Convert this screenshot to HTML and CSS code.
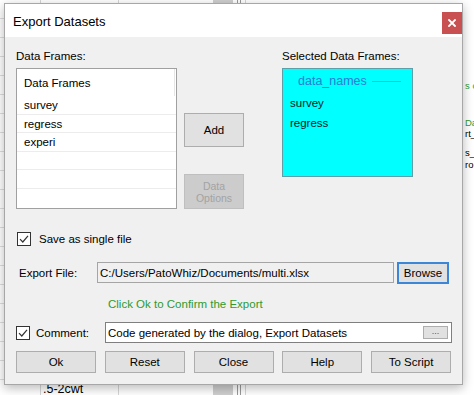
FILE: index.html
```html
<!DOCTYPE html>
<html>
<head>
<meta charset="utf-8">
<title>Export Datasets</title>
<link rel="stylesheet" href="styles.css">
</head>
<body>
<div class="desk">
  <div class="desk-notes">
    <div class="note green n1">s c</div>
    <div class="note green n2">Da</div>
    <div class="note n3">rt_</div>
    <div class="note n4">s_</div>
    <div class="note n5">ro</div>
  </div>
  <div class="desk-cell">.5-2cwt</div>
</div>

<div class="dialog">
  <div class="titlebar">
    <span class="title">Export Datasets</span>
    <span class="close">
      <svg width="8" height="8" viewBox="0 0 8 8"><path d="M1 1L7 7M7 1L1 7" stroke="#fff" stroke-width="1.8" stroke-linecap="square"/></svg>
    </span>
  </div>
  <div class="body">
    <div class="frames">
      <div class="col-left">
        <div class="label">Data Frames:</div>
        <div class="listbox">
          <div class="lb-head"><span>Data Frames</span></div>
          <div class="lb-row">survey</div>
          <div class="lb-row">regress</div>
          <div class="lb-row">experi</div>
          <div class="lb-row"></div>
          <div class="lb-row"></div>
          <div class="lb-row last"></div>
        </div>
      </div>
      <div class="col-mid">
        <div class="btn add">Add</div>
        <div class="btn disabled">Data<br>Options</div>
      </div>
      <div class="col-right">
        <div class="label">Selected Data Frames:</div>
        <div class="selbox">
          <div class="sel-legend"><span>data_names</span><i></i></div>
          <div class="sel-item">survey</div>
          <div class="sel-item">regress</div>
        </div>
      </div>
    </div>

    <div class="check-row save">
      <span class="checkbox"><svg width="12" height="12" viewBox="0 0 12 12"><path d="M2 6.2L4.8 9L10 2.8" fill="none" stroke="#333" stroke-width="1.2"/></svg></span>
      <span class="check-label">Save as single file</span>
    </div>

    <div class="export-row">
      <span class="field-label">Export File:</span>
      <div class="textbox readonly">C:/Users/PatoWhiz/Documents/multi.xlsx</div>
      <div class="btn browse">Browse</div>
    </div>

    <div class="hint">Click Ok to Confirm the Export</div>

    <div class="comment-row">
      <span class="checkbox"><svg width="12" height="12" viewBox="0 0 12 12"><path d="M2 6.2L4.8 9L10 2.8" fill="none" stroke="#333" stroke-width="1.2"/></svg></span>
      <span class="comment-label">Comment:</span>
      <div class="textbox comment">
        <span class="tb-text">Code generated by the dialog, Export Datasets</span>
        <span class="ellipsis">...</span>
      </div>
    </div>

    <div class="actions">
      <div class="btn">Ok</div>
      <div class="btn">Reset</div>
      <div class="btn">Close</div>
      <div class="btn">Help</div>
      <div class="btn">To Script</div>
    </div>
  </div>
</div>
</body>
</html>
```

FILE: styles.css
```css
* { box-sizing: border-box; }

body {
  margin: 0;
  width: 474px;
  height: 395px;
  overflow: hidden;
  position: relative;
  font-family: "Liberation Sans", Arial, sans-serif;
  font-size: 11.5px;
  color: #000;
  background: #fff;
}

/* window behind the dialog */
.desk {
  height: 395px;
  background:
    linear-gradient(90deg,
      transparent 0, transparent 40px, #d6d6d6 40px, #d6d6d6 41px,
      transparent 41px, transparent 118px, #d6d6d6 118px, #d6d6d6 119px,
      transparent 119px, transparent 213px, #cfcfcf 213px, #cfcfcf 233px,
      transparent 233px, transparent 237px, #9a9a9a 237px, #9a9a9a 238px,
      transparent 238px, transparent 240px, #9a9a9a 240px, #9a9a9a 241px,
      transparent 241px, transparent 245px, #d6d6d6 245px, #d6d6d6 246px,
      transparent 246px) 0 0 / 474px 395px no-repeat,
    repeating-linear-gradient(180deg, transparent 0, transparent 18px, #dedede 18px, #dedede 19px) 0 0 / 4px 395px no-repeat,
    #fff;
}

.desk-notes {
  padding: 80px 0 0 465px;
  font-size: 9.5px;
}
.note { line-height: 11px; height: 11px; white-space: nowrap; }
.note.green { color: #2f9a2f; }
.n2 { margin-top: 26px; }
.n3 { margin-top: 0; }
.n4 { margin-top: 8px; }
.n5 { margin-top: 1px; }

.desk-cell {
  margin-top: 212px;
  padding-left: 43px;
  font-size: 12.5px;
  line-height: 14px;
}

/* dialog (floats over the window behind) */
.dialog {
  position: absolute;
  left: 4px;
  top: 3px;
  width: 459px;
  height: 382px;
  background: #f0f0f0;
  border: 1px solid #a7a7a7;
  box-shadow: 0 3px 10px rgba(0, 0, 0, 0.28);
  display: flex;
  flex-direction: column;
}

.titlebar {
  height: 33px;
  background: #fff;
  display: flex;
  align-items: flex-start;
  justify-content: space-between;
  padding-left: 8px;
}
.title {
  font-size: 13px;
  line-height: 14px;
  margin-top: 11px;
  color: #000;
}
.close {
  width: 20px;
  height: 22px;
  margin-top: 8px;
  background: #c85050;
  display: flex;
  align-items: center;
  justify-content: center;
}

.body {
  padding: 12px 0 0 11px;
}

.frames {
  display: grid;
  grid-template-columns: 161px 60px 131px;
  column-gap: 7px;
}
.col-right { margin-left: 31px; }

.label {
  line-height: 14px;
  height: 14px;
  margin-bottom: 5px;
  white-space: nowrap;
}

.listbox {
  width: 161px;
  height: 141px;
  background: #fff;
  border: 1px solid #a0a0a0;
}
.lb-head {
  height: 27px;
  display: flex;
  align-items: center;
  padding-left: 7px;
  padding-top: 1px;
  background: linear-gradient(90deg, transparent 157px, #e6e6e6 157px, #e6e6e6 158px, transparent 158px);
}
.lb-row {
  height: 18.5px;
  line-height: 19px;
  padding-left: 7px;
  border-bottom: 1px solid #ececec;
}
.lb-row.last { border-bottom: 0; }

.col-mid {
  display: flex;
  flex-direction: column;
}

.btn {
  background: #e1e1e1;
  border: 1px solid #adadad;
  display: flex;
  align-items: center;
  justify-content: center;
  text-align: center;
  white-space: nowrap;
}
.btn.add {
  height: 34px;
  margin-top: 64px;
}
.btn.disabled {
  height: 35px;
  margin-top: 27px;
  background: #cccccc;
  border-color: #bfbfbf;
  color: #a3a3a3;
  font-size: 10.5px;
  line-height: 12px;
}

.selbox {
  width: 131px;
  height: 109px;
  background: #00ffff;
  border: 1px solid #5f9fa8;
  padding: 5px 0 0 7px;
}
.sel-legend {
  display: flex;
  align-items: center;
  height: 14px;
  margin-bottom: 5px;
  padding-left: 8px;
  color: #2b7cd3;
  font-size: 12.5px;
}
.sel-legend i {
  display: block;
  width: 29px;
  height: 1px;
  background: #4aa6dc;
  margin-left: 5px;
}
.sel-item {
  line-height: 20px;
  height: 20px;
  color: #0b2323;
}

.check-row {
  display: flex;
  align-items: center;
  height: 14px;
}
.save {
  margin-top: 23px;
  padding-left: 1px;
}
.checkbox {
  width: 14px;
  height: 14px;
  border: 1px solid #333;
  background: #fff;
  display: flex;
  align-items: center;
  justify-content: center;
  flex: none;
}
.check-label { margin-left: 8px; }

.export-row {
  margin-top: 16px;
  height: 22px;
  display: flex;
  align-items: center;
}
.field-label {
  width: 81px;
  padding-left: 3px;
}
.textbox {
  height: 21px;
  border: 1px solid #a5a5a5;
  display: flex;
  align-items: center;
  padding-left: 2px;
  white-space: nowrap;
}
.textbox.readonly {
  width: 297px;
  background: #f0f0f0;
  align-self: flex-start;
}
.btn.browse {
  width: 52px;
  height: 22px;
  margin-left: 3px;
  border: 2px solid #3b86d6;
}

.hint {
  margin-top: 13px;
  margin-left: 92px;
  line-height: 14px;
  height: 14px;
  color: #2f9a2f;
}

.comment-row {
  margin-top: 11px;
  height: 21px;
  display: flex;
  align-items: center;
}
.comment-label {
  margin-left: 6px;
  width: 69px;
}
.textbox.comment {
  width: 347px;
  background: #fff;
  border-color: #7f7f7f;
  padding-right: 3px;
}
.tb-text { flex: 1; }
.ellipsis {
  width: 25px;
  height: 13px;
  background: #e1e1e1;
  border: 1px solid #adadad;
  font-size: 9px;
  line-height: 9px;
  color: #555;
  display: flex;
  justify-content: center;
  align-items: flex-start;
}

.actions {
  margin-top: 8px;
  display: grid;
  grid-template-columns: repeat(5, 80px);
  column-gap: 8.75px;
}
.actions .btn { height: 22px; }
```
